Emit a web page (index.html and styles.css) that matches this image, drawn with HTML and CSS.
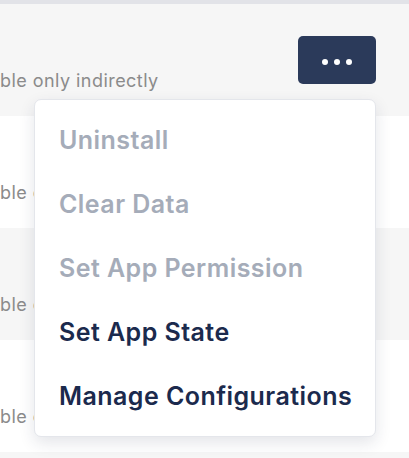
FILE: index.html
```html
<!DOCTYPE html>
<html lang="en">
<head>
<meta charset="utf-8">
<title>App actions</title>
<link rel="stylesheet" href="styles.css">
</head>
<body>
<div class="page">
  <div class="topband"></div>
  <div class="row row-gray">
    <div class="row-text">ble only indirectly</div>
    <button class="more-btn" aria-label="More actions">
      <span class="dot"></span><span class="dot"></span><span class="dot"></span>
    </button>
  </div>
  <div class="row row-white">
    <div class="row-text">ble o</div>
  </div>
  <div class="row row-gray">
    <div class="row-text">ble o</div>
  </div>
  <div class="row row-white">
    <div class="row-text">ble o</div>
  </div>
  <div class="row row-gray"></div>

  <ul class="menu">
    <li class="menu-item disabled">Uninstall</li>
    <li class="menu-item disabled">Clear Data</li>
    <li class="menu-item disabled">Set App Permission</li>
    <li class="menu-item">Set App State</li>
    <li class="menu-item">Manage Configurations</li>
  </ul>
</div>
</body>
</html>
```

FILE: styles.css
```css
* { box-sizing: border-box; }
html, body { margin: 0; padding: 0; }
body {
  font-family: "Inter", "Open Sans", "Liberation Sans", sans-serif;
  background: #ffffff;
  overflow: hidden;
}
.page {
  position: relative;
  width: 409px;
  height: 458px;
  overflow: hidden;
}
.topband {
  height: 4px;
  background: #e2e3e8;
}
.row {
  height: 112px;
  display: flex;
  justify-content: space-between;
  align-items: flex-start;
}
.row-gray { background: #f6f6f6; }
.row-white { background: #ffffff; }
.row-text {
  margin-top: 65px;
  font-size: 18px;
  line-height: 24px;
  letter-spacing: 0.45px;
  color: #8b8b8b;
  white-space: nowrap;
}
.more-btn {
  margin: 32px 33px 0 0;
  width: 78px;
  height: 48px;
  border: none;
  border-radius: 5px;
  background: #2b3a5a;
  display: flex;
  align-items: center;
  justify-content: center;
  gap: 6px;
  padding: 4px 0 0 0;
  cursor: pointer;
}
.dot {
  width: 6px;
  height: 6px;
  border-radius: 50%;
  background: #ffffff;
}
.menu {
  position: absolute;
  top: 99px;
  left: 34px;
  width: 342px;
  margin: 0;
  padding: 8px 0;
  list-style: none;
  background: #ffffff;
  border: 1px solid #e4e6eb;
  border-radius: 7px;
  box-shadow: 0 6px 16px rgba(30, 40, 70, 0.12);
}
.menu-item {
  height: 64px;
  display: flex;
  align-items: center;
  padding: 0 24px;
  font-size: 25px;
  font-weight: 600;
  letter-spacing: 0.45px;
  color: #1b2a4d;
  white-space: nowrap;
}
.menu-item.disabled { color: #a5acb9; }
```
